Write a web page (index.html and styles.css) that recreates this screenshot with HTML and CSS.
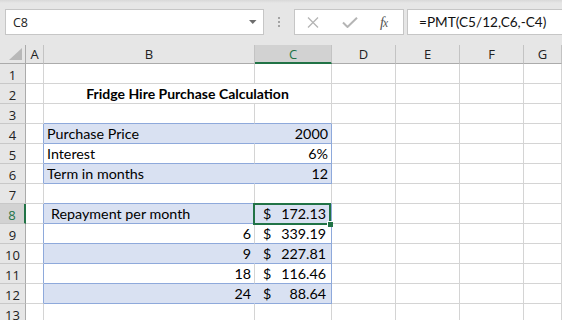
FILE: index.html
```html
<!DOCTYPE html>
<html>
<head>
<meta charset="utf-8">
<link rel="stylesheet" href="styles.css">
</head>
<body>
<div class="toolbar">
  <div class="namebox"><span>C8</span><svg class="caret" width="8" height="4" viewBox="0 0 8 4"><path d="M0 0H7.5L3.75 4Z" fill="#6d6d6d"/></svg></div>
  <div class="grip"><i></i><i></i><i></i></div>
  <div class="fxbox">
    <svg class="ic-x" width="12" height="11" viewBox="0 0 12 11"><path d="M1 0.5L11 10.5M11 0.5L1 10.5" stroke="#b5b5b5" stroke-width="1.3" fill="none"/></svg>
    <svg class="ic-ok" width="16" height="11" viewBox="0 0 16 11"><path d="M1 5.5L5.5 10L15 0.8" stroke="#b5b5b5" stroke-width="2" fill="none"/></svg>
    <span class="fx">f<span class="fxx">x</span></span>
  </div>
  <div class="formula">=PMT(C5/12,C6,-C4)</div>
</div>
<div class="sheet">
  <div class="hd corner"><svg width="13" height="12" viewBox="0 0 13 12"><path d="M13 0V12H0Z" fill="#b8b8b8"/></svg></div>
  <div class="hd">A</div><div class="hd">B</div><div class="hd hsel">C</div><div class="hd">D</div><div class="hd">E</div><div class="hd">F</div><div class="hd">G</div>

  <div class="rh">1</div><div class="cell"></div><div class="cell"></div><div class="cell"></div><div class="cell"></div><div class="cell"></div><div class="cell"></div><div class="cell"></div>

  <div class="rh">2</div><div class="cell"></div><div class="cell title">Fridge Hire Purchase Calculation</div><div class="cell"></div><div class="cell"></div><div class="cell"></div><div class="cell"></div>

  <div class="rh">3</div><div class="cell"></div><div class="cell above"></div><div class="cell above"></div><div class="cell"></div><div class="cell"></div><div class="cell"></div><div class="cell"></div>

  <div class="rh">4</div><div class="cell tl"></div><div class="cell tb fill nor">Purchase Price</div><div class="cell tb fill tr num">2000</div><div class="cell"></div><div class="cell"></div><div class="cell"></div><div class="cell"></div>

  <div class="rh">5</div><div class="cell tl"></div><div class="cell tb">Interest</div><div class="cell tb tr num">6%</div><div class="cell"></div><div class="cell"></div><div class="cell"></div><div class="cell"></div>

  <div class="rh">6</div><div class="cell tl"></div><div class="cell tb fill nor">Term in months</div><div class="cell tb fill tr num">12</div><div class="cell"></div><div class="cell"></div><div class="cell"></div><div class="cell"></div>

  <div class="rh">7</div><div class="cell"></div><div class="cell above"></div><div class="cell above"></div><div class="cell"></div><div class="cell"></div><div class="cell"></div><div class="cell"></div>

  <div class="rh rsel">8</div><div class="cell tl"></div><div class="cell tb fill nor indent">Repayment per month</div><div class="cell tb fill tr acc active"><span>$</span><span>172.13</span><div class="sel"><i class="handle"></i></div></div><div class="cell"></div><div class="cell"></div><div class="cell"></div><div class="cell"></div>

  <div class="rh">9</div><div class="cell tl"></div><div class="cell tb num">6</div><div class="cell tb tr acc"><span>$</span><span>339.19</span></div><div class="cell"></div><div class="cell"></div><div class="cell"></div><div class="cell"></div>

  <div class="rh">10</div><div class="cell tl"></div><div class="cell tb fill nor num">9</div><div class="cell tb fill tr acc"><span>$</span><span>227.81</span></div><div class="cell"></div><div class="cell"></div><div class="cell"></div><div class="cell"></div>

  <div class="rh">11</div><div class="cell tl"></div><div class="cell tb num">18</div><div class="cell tb tr acc"><span>$</span><span>116.46</span></div><div class="cell"></div><div class="cell"></div><div class="cell"></div><div class="cell"></div>

  <div class="rh">12</div><div class="cell tl"></div><div class="cell tb fill nor num">24</div><div class="cell tb fill tr acc"><span>$</span><span>88.64</span></div><div class="cell"></div><div class="cell"></div><div class="cell"></div><div class="cell"></div>

  <div class="rh">13</div><div class="cell"></div><div class="cell"></div><div class="cell"></div><div class="cell"></div><div class="cell"></div><div class="cell"></div><div class="cell"></div>
</div>
</body>
</html>
```

FILE: styles.css
```css
html, body {
  margin: 0;
  padding: 0;
}
body {
  width: 562px;
  height: 320px;
  overflow: hidden;
  background: #fff;
  font-family: Lato, "Liberation Sans", sans-serif;
  color: #000;
}

/* formula bar */
.toolbar {
  height: 45px;
  box-sizing: border-box;
  padding-top: 9px;
  display: flex;
  align-items: flex-start;
  background: linear-gradient(#d8d8d8, #e6e6e6 3px);
}
.namebox {
  margin-left: 5px;
  width: 259px;
  height: 26px;
  box-sizing: border-box;
  border: 1px solid #c6c6c6;
  background: #fff;
  display: flex;
  align-items: center;
  justify-content: space-between;
  padding: 0 6px 0 7px;
  font: 12.5px "Open Sans", sans-serif;
  color: #222;
}
.grip {
  width: 30px;
  height: 26px;
  display: flex;
  flex-direction: column;
  align-items: center;
  justify-content: center;
  gap: 2px;
}
.grip i {
  width: 2px;
  height: 2px;
  background: #a3a3a3;
}
.fxbox {
  width: 110px;
  height: 26px;
  box-sizing: border-box;
  border: 1px solid #c6c6c6;
  background: #fff;
  display: flex;
  align-items: center;
  padding-left: 12px;
}
.ic-x { margin-right: 23px; }
.ic-ok { margin-right: 22px; }
.fx {
  font: italic 14.5px "Liberation Serif", serif;
  color: #555;
  letter-spacing: -1px;
}
.fxx { font-size: 11.5px; }
.formula {
  margin-left: 3px;
  flex: 1;
  height: 26px;
  box-sizing: border-box;
  border: 1px solid #c6c6c6;
  border-right: 0;
  background: #fff;
  padding-left: 11px;
  display: flex;
  align-items: center;
  font: 13.6px Lato, sans-serif;
  color: #111;
}

/* sheet */
.sheet {
  display: grid;
  grid-template-columns: 26px 18px 211px 77px 64px 64px 64px 38px;
  grid-template-rows: 19px repeat(13, 20px);
}
.hd {
  background: #e6e6e6;
  border-right: 1px solid #c3c3c3;
  border-bottom: 1px solid #ababab;
  display: flex;
  align-items: center;
  justify-content: center;
  font: 13px "Open Sans", sans-serif;
  color: #222;
}
.corner {
  justify-content: flex-end;
  align-items: flex-end;
  padding: 0 3px 3px 0;
  border-right-color: #ababab;
}
.hsel {
  background: #d2d2d2;
  color: #217346;
  border-bottom: 2px solid #217346;
}
.rh {
  background: #e6e6e6;
  border-right: 1px solid #ababab;
  border-bottom: 1px solid #c8c8c8;
  display: flex;
  align-items: center;
  justify-content: center;
  padding-top: 2px;
  font: 13px "Open Sans", sans-serif;
  color: #222;
}
.rsel {
  background: #d2d2d2;
  color: #217346;
  border-right: 2px solid #217346;
}
.cell {
  position: relative;
  border-right: 1px solid #d4d4d4;
  border-bottom: 1px solid #d4d4d4;
  display: flex;
  align-items: flex-end;
  padding: 0 3px 1px 3px;
  font-size: 14.3px;
  line-height: 17px;
  white-space: nowrap;
}
.title {
  grid-column: span 2;
  justify-content: center;
  font-weight: bold;
  font-size: 14px;
  border-right-color: #d4d4d4;
}
.above { border-bottom-color: #8ea9db; }
.tb { border-bottom-color: #8ea9db; }
.tl { border-right-color: #8ea9db; }
.tr { border-right-color: #8ea9db; }
.fill { background: #d9e1f2; }
.nor { border-right-color: transparent; }
.num { justify-content: flex-end; }
.indent { padding-left: 7px; }
.acc {
  justify-content: space-between;
  padding: 0 5px 1px 8px;
}
.sel {
  position: absolute;
  left: -2px;
  top: -1px;
  right: 0;
  bottom: -2px;
  border: 2px solid #217346;
  z-index: 2;
}
.handle {
  position: absolute;
  right: -4px;
  bottom: -4px;
  width: 5px;
  height: 5px;
  background: #217346;
  border-left: 1px solid #fff;
  border-top: 1px solid #fff;
}
```
